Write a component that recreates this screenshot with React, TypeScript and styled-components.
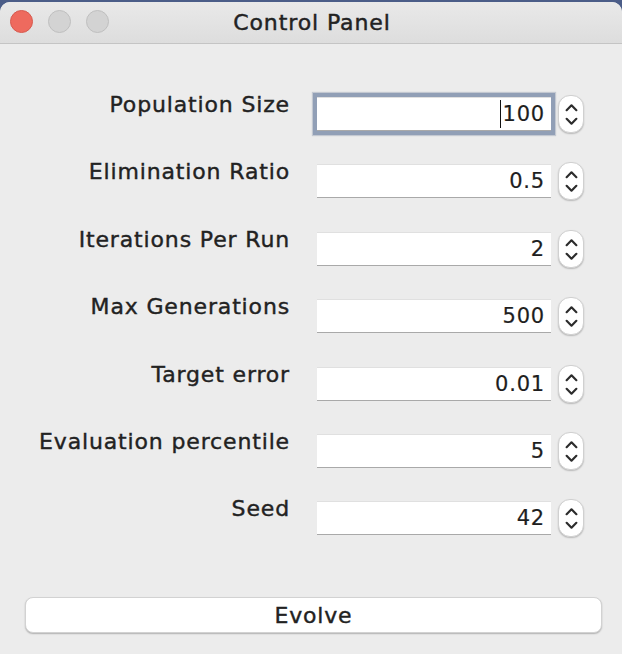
import React from "react";
import styled, { createGlobalStyle } from "styled-components";

const GlobalStyle = createGlobalStyle`
  html, body {
    margin: 0;
    padding: 0;
    background: #4b5d88;
  }
  body {
    font-family: "DejaVu Sans", "Liberation Sans", sans-serif;
    color: #222;
  }
`;

type Param = { label: string; value: string; focused?: boolean };

const params: Param[] = [
  { label: "Population Size", value: "100", focused: true },
  { label: "Elimination Ratio", value: "0.5" },
  { label: "Iterations Per Run", value: "2" },
  { label: "Max Generations", value: "500" },
  { label: "Target error", value: "0.01" },
  { label: "Evaluation percentile", value: "5" },
  { label: "Seed", value: "42" },
];

export default function App() {
  return (
    <>
      <GlobalStyle />
      <Window>
        <TitleBar>
          <Lights>
            <Light $color="#ee6a5e" $border="#d65a4f" />
            <Light $color="#d3d3d3" $border="#bfbfbf" />
            <Light $color="#d3d3d3" $border="#bfbfbf" />
          </Lights>
          <Title>Control Panel</Title>
        </TitleBar>

        <Form>
          {params.map((p) => (
            <React.Fragment key={p.label}>
              <Label>{p.label}</Label>
              <FieldGroup>
                <Field $focused={p.focused}>
                  {p.focused && <Caret />}
                  {p.value}
                </Field>
                <Spinner>
                  <Chevron viewBox="0 0 12 8">
                    <polyline points="1.5,6.5 6,2 10.5,6.5" />
                  </Chevron>
                  <Chevron viewBox="0 0 12 8">
                    <polyline points="1.5,1.5 6,6 10.5,1.5" />
                  </Chevron>
                </Spinner>
              </FieldGroup>
            </React.Fragment>
          ))}
        </Form>

        <Footer>
          <Button type="button">Evolve</Button>
        </Footer>
      </Window>
    </>
  );
}

const Window = styled.div`
  margin-top: 2px;
  height: 652px;
  width: 622px;
  background: #ececec;
  border-radius: 10px 10px 0 0;
  overflow: hidden;
  display: flex;
  flex-direction: column;
`;

const TitleBar = styled.div`
  position: relative;
  height: 41px;
  flex: none;
  display: flex;
  align-items: center;
  justify-content: center;
  background: linear-gradient(180deg, #e9e9e9 0%, #dddddd 100%);
  border-bottom: 1px solid #c4c4c4;
`;

const Lights = styled.div`
  position: absolute;
  left: 10px;
  top: 8px;
  display: flex;
  gap: 15px;
`;

const Light = styled.span<{ $color: string; $border: string }>`
  width: 23px;
  height: 23px;
  box-sizing: border-box;
  border-radius: 50%;
  background: ${({ $color }) => $color};
  border: 1px solid ${({ $border }) => $border};
`;

const Title = styled.div`
  font-size: 22px;
  letter-spacing: 0.9px;
  color: #222;
  -webkit-text-stroke: 0.45px #222;
  margin-left: 2px;
`;

const Form = styled.div`
  display: grid;
  grid-template-columns: 290px auto;
  grid-auto-rows: 34px;
  column-gap: 27px;
  row-gap: 33.4px;
  padding-top: 53px;
`;

const Label = styled.div`
  justify-self: end;
  align-self: start;
  margin-top: -5px;
  font-size: 22px;
  line-height: 25px;
  letter-spacing: 0.85px;
  color: #222;
  -webkit-text-stroke: 0.4px #222;
  white-space: nowrap;
`;

const FieldGroup = styled.div`
  display: flex;
  align-items: center;
  gap: 7px;
`;

const Field = styled.div<{ $focused?: boolean }>`
  box-sizing: border-box;
  width: 234px;
  height: 34px;
  padding: 0 6px 0 0;
  display: flex;
  align-items: center;
  justify-content: flex-end;
  background: #fff;
  font-size: 21px;
  letter-spacing: 0.8px;
  color: #1e1e1e;
  -webkit-text-stroke: 0.2px #1e1e1e;
  border-top: 1px solid #e0e0e0;
  border-bottom: 1.5px solid #a9a9a9;
  box-shadow: ${({ $focused }) =>
    $focused ? "0 0 0 4px #919fb6, 0 0 1px 5px rgba(120,135,160,0.35)" : "none"};
`;

const Caret = styled.span`
  width: 0;
  height: 28px;
  border-left: 1.5px solid #111;
  margin-right: 2px;
`;

const Spinner = styled.div`
  box-sizing: border-box;
  width: 26px;
  height: 38px;
  border-radius: 12px;
  background: #fff;
  border: 1px solid #d0d0d0;
  box-shadow: 0 1px 1.5px rgba(0, 0, 0, 0.22);
  display: flex;
  flex-direction: column;
  align-items: center;
  justify-content: space-between;
  padding: 7px 0 6px;
`;

const Chevron = styled.svg`
  width: 13px;
  height: 9px;
  fill: none;
  stroke: #2c2c2c;
  stroke-width: 2;
  stroke-linecap: round;
  stroke-linejoin: round;
`;

const Footer = styled.div`
  margin-top: auto;
  padding: 0 20px 21px 25px;
`;

const Button = styled.button`
  width: 100%;
  height: 36px;
  border-radius: 8px;
  border: 1px solid #d2d2d2;
  background: #fff;
  box-shadow: 0 1px 1.5px rgba(0, 0, 0, 0.25);
  font-family: "DejaVu Sans", "Liberation Sans", sans-serif;
  font-size: 22px;
  letter-spacing: 0.8px;
  color: #222;
  -webkit-text-stroke: 0.4px #222;
  padding: 0;
`;
